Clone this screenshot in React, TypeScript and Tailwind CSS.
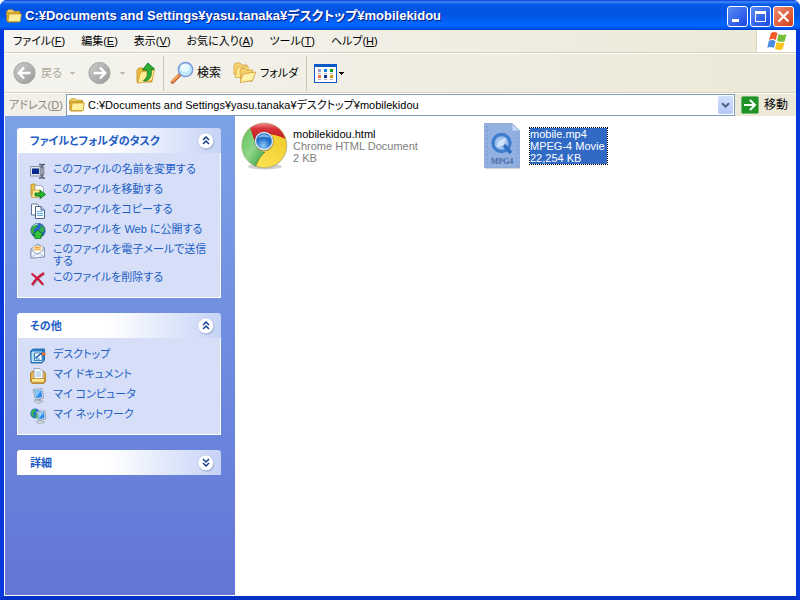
import React from 'react';

interface IconProps {
  className?: string;
}

const FolderIcon: React.FC<IconProps> = ({ className = 'size-4' }) => (
  <svg viewBox="0 0 16 16" className={className} aria-hidden="true">
    <path d="M.8 3.5 2.2 1.8H6.5L8 3.3H13.5V7H.8Z" fill="#f6d768" stroke="#c08d1c" strokeWidth=".8" />
    <path d="M.8 4.2V13L2 14H13L14 12.5V4.8H2Z" fill="#e8b83c" stroke="#b78313" strokeWidth=".8" />
    <path d="M3.2 6H15.4L14.2 13.6H2Z" fill="#fff0a0" stroke="#c8951d" strokeWidth=".8" />
  </svg>
);

const RenameIcon = () => (
  <svg viewBox="0 0 16 16" className="size-4 shrink-0" aria-hidden="true">
    <path d="M.5 3.5H11.5V13H.5Z" fill="#e4e7ee" stroke="#8a93a8" />
    <path d="M2 5.5H9V11H2Z" fill="#07288c" />
    <path d="M9 1.5H11L12 2.5 13 1.5H15M12 2.5V14M9 15H11L12 14 13 15H15" fill="none" stroke="#555e70" strokeWidth="1.6" />
    <path d="M10.2 4H13.8V12H10.2Z" fill="#d7dae0" stroke="#555e70" strokeWidth=".8" />
    <path d="M12 4V12" stroke="#555e70" />
  </svg>
);

const MoveIcon = () => (
  <svg viewBox="0 0 16 16" className="size-4 shrink-0" aria-hidden="true">
    <path d="M1 2 2 1H5L6 3H12V13H2L1 12Z" fill="#e8bd49" stroke="#b58527" strokeWidth=".8" />
    <path d="M5 2.5H11L13.5 5V12H5Z" fill="#fff" stroke="#8b98ad" strokeWidth=".7" />
    <path d="M3 7H10L8 14.5H1.5Z" fill="#ffeb98" stroke="#c19431" strokeWidth=".7" />
    <path d="M5 10H10V7L15.5 11.5 10 15.7V13H5Z" fill="#25b52c" stroke="#0a7217" strokeWidth=".8" />
  </svg>
);

const CopyIcon = () => (
  <svg viewBox="0 0 16 16" className="size-4 shrink-0" aria-hidden="true">
    <path d="M1.5 1H7L10 4V12H1.5Z" fill="#fff" stroke="#5d789b" />
    <path d="M5.5 3.5H11L14.5 7V15.5H5.5Z" fill="#f8fcff" stroke="#486586" />
    <path d="M11 3.5V7H14.5" fill="#a9cff0" stroke="#486586" />
    <path d="M7 8.5H12.5M7 10.5H13M7 12.5H13" stroke="#64aadf" />
  </svg>
);

const PublishIcon = () => (
  <svg viewBox="0 0 16 16" className="size-4 shrink-0" aria-hidden="true">
    <circle cx="8" cy="7.5" r="7.2" fill="#2868ce" stroke="#204479" strokeWidth=".6" />
    <path d="M2 4Q4 .7 8 1L7 4 4 6 4.5 9 2 11Q0 8 2 4ZM10 2Q14 3 14.7 7L12 10 9 7 11 5Z" fill="#35ad45" />
    <path d="M3 2.8Q5 1 8 1" fill="none" stroke="#b5e8fa" />
    <path d="M8 7 13.5 12H11V15.6H5V12H2.5Z" fill="#35c338" stroke="#08731a" strokeWidth=".8" />
  </svg>
);

const MailIcon = () => (
  <svg viewBox="0 0 16 16" className="size-4 shrink-0" aria-hidden="true">
    <path d="M1 6 7.5 1 14.7 5 14 14 1 15Z" fill="#cbd9ed" stroke="#7185a5" strokeWidth=".8" />
    <path d="M3 3H12.5V9L7.5 12 3 9Z" fill="#fff" stroke="#a8acaf" strokeWidth=".5" />
    <path d="M4 4.5H11M4 6.5H11" stroke="#f3aa38" strokeWidth="1.3" />
    <path d="M1 6.5 7.5 11.5 14.5 6V14L1 15Z" fill="#edf5ff" stroke="#7185a5" strokeWidth=".7" />
    <path d="M1.3 14.5 6 10.5 9 10.3 14 13.7" fill="none" stroke="#8ca3c5" strokeWidth=".7" />
  </svg>
);

const DeleteIcon = () => (
  <svg viewBox="0 0 16 16" className="size-4 shrink-0" aria-hidden="true">
    <path d="M2.5 3.5Q8 8 14 14.5M14.5 3Q7 8 3 15" fill="none" stroke="#a9abc4" strokeWidth="2" />
    <path d="M1.5 2.5Q8 7 13 13.5M14 2Q6 7 2 14" fill="none" stroke="#cf1436" strokeWidth="2.1" />
  </svg>
);

const DesktopIcon = () => (
  <svg viewBox="0 0 16 16" className="size-4 shrink-0" aria-hidden="true">
    <path d="M3 1H14.5V12L12 15H1L.5 3Z" fill="#2781d0" stroke="#195a9e" strokeWidth=".8" />
    <path d="M2 4H12V13.5H2Z" fill="#9bd4fa" stroke="#fff" strokeWidth=".7" />
    <path d="M4.5 5H10L12 7V12.5H4.5Z" fill="#fff" stroke="#2167a6" strokeWidth=".8" />
    <path d="M6 10 12 4.5" stroke="#195a9e" strokeWidth="1.6" />
    <path d="M12 4.5H15.5V7.2H12Z" fill="#e46a29" />
    <path d="M6 8V11H10" fill="none" stroke="#2781d0" />
  </svg>
);

const DocumentsIcon = () => (
  <svg viewBox="0 0 16 16" className="size-4 shrink-0" aria-hidden="true">
    <path d="M.7 5 2 3.5H14L15.3 5V14L14 15.3H2L.7 14Z" fill="#efb84c" stroke="#a76f17" strokeWidth=".9" />
    <path d="M4 .7H10L13 3.7V11H4Z" fill="#fff" stroke="#7c91ad" strokeWidth=".8" />
    <path d="M5.5 4H11M5.5 6H11M5.5 8H11" stroke="#8bbae4" />
    <path d="M1.5 10.5H14.5V14.3H1.5Z" fill="#ffe68a" stroke="#b57d20" strokeWidth=".7" />
  </svg>
);

const ComputerIcon = () => (
  <svg viewBox="0 0 16 16" className="size-4 shrink-0" aria-hidden="true">
    <path d="M4 13 9 11.5 13.5 13.5 8 15.7Z" fill="#d5d9e1" stroke="#8a91a0" strokeWidth=".6" />
    <path d="M8 10.5H11V13.5H8Z" fill="#a7adba" />
    <path d="M3 1.3 12 .7 13.8 10 5.5 11.8Z" fill="#dce3ee" stroke="#8590a5" strokeWidth=".8" />
    <path d="M4.4 2.6 11 2 12.3 9 6.3 10.2Z" fill="#2c8cec" />
    <path d="M4.5 2.7 11 2 8 7 6 9Z" fill="#82c8fb" />
  </svg>
);

const NetworkIcon = () => (
  <svg viewBox="0 0 16 16" className="size-4 shrink-0" aria-hidden="true">
    <circle cx="5.2" cy="5.5" r="4.9" fill="#1f70cd" />
    <path d="M1 4Q3 .7 6 1L5 4 3 5 4 8 2 9ZM6 6H8V10H5Z" fill="#38ba42" />
    <path d="M6 14 10 12.5 14.5 14 10 15.8Z" fill="#e0e2e8" stroke="#8a91a0" strokeWidth=".6" />
    <path d="M6.5 3.5 15 2.8 15.5 11 8.5 12.7Z" fill="#dce3ee" stroke="#8590a5" strokeWidth=".8" />
    <path d="M7.6 4.7 14 4 14.3 10 9.2 11.2Z" fill="#2c8cec" />
    <path d="M7.8 4.8 14 4 11 8 9 10Z" fill="#94d0fa" />
  </svg>
);

const RoundArrow: React.FC<{ back?: boolean }> = ({ back = false }) => (
  <svg viewBox="0 0 24 24" className="size-6" aria-hidden="true">
    <defs>
      <linearGradient id={back ? 'round-back' : 'round-forward'} x1="0" y1="0" x2="1" y2="1">
        <stop stopColor="#ccc" />
        <stop offset="1" stopColor="#999" />
      </linearGradient>
    </defs>
    <circle cx="11.5" cy="12" r="10.6" fill={back ? 'url(#round-back)' : 'url(#round-forward)'} stroke="#a3a3a0" />
    <path
      d={back ? 'M17.5 12H7M11 6.5 5.8 12 11 17.5' : 'M5.5 12H16M12 6.5 17.2 12 12 17.5'}
      fill="none"
      stroke="#fff"
      strokeWidth="2.4"
    />
  </svg>
);

const UpFolderIcon = () => (
  <svg viewBox="0 0 20 22" className="h-[22px] w-5" aria-hidden="true">
    <path d="M1 8 3 6H7L8.5 7.5H16V20H1Z" fill="#edbd42" stroke="#c28f1e" strokeWidth=".8" />
    <path d="M4.5 10 18.5 8 16 18.5 1.5 21.2Z" fill="#ffeb91" stroke="#c99a2a" strokeWidth=".8" />
    <path d="M7.5 18.5Q12.5 16 11 8H6.5L11.8 1 18.6 7 15 7.7Q16.8 16 10 19Z" fill="#2fae36" stroke="#14771f" strokeWidth=".9" />
  </svg>
);

const SearchIcon = () => (
  <svg viewBox="0 0 24 24" className="size-6" aria-hidden="true">
    <path d="M9.5 14 2.5 21" stroke="#c0602a" strokeWidth="3.6" strokeLinecap="round" />
    <path d="M8.5 14.2 2.3 20.2" stroke="#f8a562" strokeWidth="2" strokeLinecap="round" />
    <circle cx="15.5" cy="8.5" r="7.1" fill="#bfeafc" stroke="#7f97d8" strokeWidth="1.5" />
    <ellipse cx="15" cy="7" rx="4.4" ry="3.8" fill="#e8faff" />
    <path d="M12 6Q13 4 15.5 4" fill="none" stroke="#fff" strokeWidth="1.5" />
  </svg>
);

const FoldersIcon = () => (
  <svg viewBox="0 0 24 22" className="h-[22px] w-6" aria-hidden="true">
    <path d="M1 3 2.5 1H7L9 3H14V14H3L1 12Z" fill="#f7d372" stroke="#d9a245" strokeWidth=".9" />
    <path d="M2 15.5 4.5 5H15.5L13 15.5Z" fill="#ffe993" stroke="#d8a646" strokeWidth=".8" />
    <path d="M7 9 8 6.5H12L14 8H19.5V19H8Z" fill="#f6d068" stroke="#d9a245" strokeWidth=".9" />
    <path d="M10 12 22.8 10 19.5 18.5 7 20.5Z" fill="#fff2a9" stroke="#d6a440" strokeWidth=".9" />
  </svg>
);

const ViewsIcon = () => (
  <svg viewBox="0 0 23 19" className="h-[19px] w-[23px]" shapeRendering="crispEdges" aria-hidden="true">
    <path d="M0 0H23V19H0Z" fill="#0b5bc6" />
    <path d="M1 3H22V18H1Z" fill="#fff" />
    <path d="M4 5H7V8H4Z" fill="#9999cc" />
    <path d="M10 5H13V8H10Z" fill="#0a84e8" />
    <path d="M16 5H19V8H16Z" fill="#109a10" />
    <path d="M4 11H7V14H4Z" fill="#ff7448" />
    <path d="M10 11H13V14H10Z" fill="#09319b" />
    <path d="M16 11H19V14H16Z" fill="#d39c0c" />
    <path d="M4 9.5H7M10 9.5H13M16 9.5H19M4 15.5H7M10 15.5H13M16 15.5H19" stroke="#b5b5b5" />
  </svg>
);

const WindowsFlag = () => (
  <svg viewBox="0 0 20 20" className="size-5" aria-hidden="true">
    <path d="M4 2Q7.5 0 10.5 2.3L8.8 9Q5.5 7 2 9Z" fill="#f0592b" />
    <path d="M11.7 3Q15.5 5 19.5 3L17.8 10Q14 12 10 9.8Z" fill="#77bd35" />
    <path d="M1.8 10Q5.3 8 8.5 10.2L6.9 17Q4 15 .3 16.7Z" fill="#4a8dde" />
    <path d="M9.7 11Q13.5 13 17.5 11.2L15.8 18Q12 20 8 17.7Z" fill="#f8c51c" />
  </svg>
);

const ChromeIcon = () => (
  <svg viewBox="0 0 48 48" className="size-12 shrink-0" aria-hidden="true">
    <defs>
      <linearGradient id="chrome-red" x1="0" y1="0" x2="0" y2="1">
        <stop stopColor="#f0908a" />
        <stop offset=".3" stopColor="#d8333a" />
        <stop offset="1" stopColor="#b60f18" />
      </linearGradient>
      <linearGradient id="chrome-green" x1="0" y1="0" x2="1" y2="1">
        <stop stopColor="#5fbf5a" />
        <stop offset=".5" stopColor="#8fd78a" />
        <stop offset="1" stopColor="#2c9938" />
      </linearGradient>
      <linearGradient id="chrome-yellow" x1="1" y1="0" x2="0" y2="1">
        <stop stopColor="#eec720" />
        <stop offset="1" stopColor="#ffe85f" />
      </linearGradient>
      <radialGradient id="chrome-blue" cx=".45" cy=".8">
        <stop stopColor="#8cc8fa" />
        <stop offset="1" stopColor="#1d6cc8" />
      </radialGradient>
    </defs>
    <ellipse cx="24" cy="44.5" rx="17" ry="3" fill="#999" opacity=".45" />
    <circle cx="23.3" cy="23.5" r="22.5" fill="url(#chrome-yellow)" stroke="#8b8d72" strokeWidth=".6" />
    <path d="M9 6Q16 .8 24 1 39 2 44.5 17 35 12 24 12 15 12 13.5 20Z" fill="url(#chrome-red)" />
    <path d="M9 6 14 20Q15 29 24 30 18 35 14.5 44.3 3 39 1 27 0 14 9 6Z" fill="url(#chrome-green)" />
    <path d="M24 30Q18 35 14.5 44.3" fill="none" stroke="#5d7c2d" strokeWidth=".8" />
    <circle cx="23" cy="19.5" r="9.8" fill="#52525c" opacity=".55" />
    <circle cx="23" cy="19" r="9.2" fill="#dce6f0" />
    <circle cx="23" cy="19" r="7.8" fill="url(#chrome-blue)" />
    <path d="M17 16Q18.5 12.5 23 12.2 27.5 12.5 29 16 23 14 17 16Z" fill="#a9cdf4" opacity=".7" />
  </svg>
);

const Mpeg4Icon = () => (
  <svg viewBox="0 0 48 48" className="size-12 shrink-0" aria-hidden="true">
    <path d="M7 2H35L42 9V47H7Z" fill="#b5bdce" opacity=".6" />
    <path d="M6.5 1.5H34L41.5 9V45.5H6.5Z" fill="#92b0e0" stroke="#86a3d4" strokeWidth=".8" />
    <path d="M34 1.5V9H41.5Z" fill="#c3d8f7" stroke="#86a3d4" strokeWidth=".6" />
    <path d="M9 4V45M39 11V45" stroke="#7295d0" strokeWidth="1.2" strokeDasharray="1.5 2.5" />
    <circle cx="23.5" cy="21" r="8.5" fill="#a3c2ee" stroke="#3f7fd0" strokeWidth="3.4" />
    <path d="M26 23 33 31" stroke="#2f6fc2" strokeWidth="3.6" />
    <path d="M18.5 25.5 20.5 19 28 15.5 26 23Z" fill="#cfe2fb" />
    <text x="24" y="42" textAnchor="middle" fontFamily="Liberation Serif, serif" fontSize="8" fontWeight="700" fill="#4a6ca6">
      MPG4
    </text>
  </svg>
);

const Caret: React.FC<IconProps> = ({ className }) => (
  <svg viewBox="0 0 5 3" className={`h-[3px] w-[5px] ${className ?? ''}`} shapeRendering="crispEdges" aria-hidden="true">
    <path d="M0 0H5L2.5 3Z" fill="currentColor" />
  </svg>
);

const menus = [
  { label: 'ファイル', accessKey: 'F' },
  { label: '編集', accessKey: 'E' },
  { label: '表示', accessKey: 'V' },
  { label: 'お気に入り', accessKey: 'A' },
  { label: 'ツール', accessKey: 'T' },
  { label: 'ヘルプ', accessKey: 'H' },
];

const fileTasks = [
  { label: 'このファイルの名前を変更する', icon: <RenameIcon /> },
  { label: 'このファイルを移動する', icon: <MoveIcon /> },
  { label: 'このファイルをコピーする', icon: <CopyIcon /> },
  { label: 'このファイルを Web に公開する', icon: <PublishIcon /> },
  { label: 'このファイルを電子メールで送信する', icon: <MailIcon /> },
  { label: 'このファイルを削除する', icon: <DeleteIcon /> },
];

const places = [
  { label: 'デスクトップ', icon: <DesktopIcon /> },
  { label: 'マイ ドキュメント', icon: <DocumentsIcon /> },
  { label: 'マイ コンピュータ', icon: <ComputerIcon /> },
  { label: 'マイ ネットワーク', icon: <NetworkIcon /> },
];

interface TaskPanelProps {
  title: string;
  items?: { label: string; icon: React.ReactNode }[];
}

const TaskPanel: React.FC<TaskPanelProps> = ({ title, items }) => (
  <section>
    <h2>
      <button
        aria-expanded={!!items}
        className="flex h-[25px] w-full items-center justify-between rounded-t-[3px] bg-linear-to-r from-white from-45% to-[#c6d3f7] pr-1.5 pl-[13px] font-bold text-[#215dc6]"
      >
        {title}
        <svg viewBox="0 0 18 18" className="size-[18px]" aria-hidden="true">
          <circle cx="9.5" cy="9.8" r="8" fill="#a5b1d2" />
          <circle cx="8.7" cy="8.7" r="7.8" fill="#fff" stroke="#b8c4e3" strokeWidth=".7" />
          <path
            d={items ? 'M6 8 9 5 12 8M6 12 9 9 12 12' : 'M6 5 9 8 12 5M6 9 9 12 12 9'}
            fill="none"
            stroke="#123d91"
            strokeWidth="1.5"
          />
        </svg>
      </button>
    </h2>
    {items && (
      <ul className="flex flex-col gap-1 border border-t-0 border-white bg-[#d6dff7] px-3 py-2.5">
        {items.map((item) => (
          <li key={item.label}>
            <a href="#" className="flex min-h-4 items-start gap-[7px] text-[#215dc6]">
              {item.icon}
              <span className="leading-3">{item.label}</span>
            </a>
          </li>
        ))}
      </ul>
    )}
  </section>
);

const captionButton =
  'flex size-[21px] items-center justify-center rounded-[3px] border border-white bg-linear-to-br';

export default function App() {
  return (
    <div className="bg-white">
      <div className="flex h-screen flex-col overflow-hidden rounded-t-[7px] bg-[#0831d9] font-['Liberation_Sans','Noto_Sans_CJK_JP',sans-serif] text-[11px] leading-3 text-black [font-feature-settings:'palt']">
        {/* Title bar */}
        <header className="flex h-[30px] shrink-0 items-center bg-[linear-gradient(to_bottom,#0831d9_0%,#3b8cf7_6%,#0a5ce8_14%,#0054e3_30%,#0054e3_50%,#0066ff_80%,#0060f8_90%,#003dcc_100%)] pt-0.5 pr-1.5 pl-1.5">
          <FolderIcon />
          <h1 className="ml-[3px] grow truncate text-[13px] leading-4 font-bold text-white [text-shadow:1px_1px_#0a1e8c]">
            C:¥Documents and Settings¥yasu.tanaka¥デスクトップ¥mobilekidou
          </h1>
          <div className="flex gap-0.5">
            <button aria-label="最小化" className={`${captionButton} from-[#5c8af5] to-[#1c46e0]`}>
              <svg viewBox="0 0 19 19" className="size-[19px]" aria-hidden="true">
                <path d="M4 12H11V15H4Z" fill="#fff" />
              </svg>
            </button>
            <button aria-label="最大化" className={`${captionButton} from-[#5c8af5] to-[#1c46e0]`}>
              <svg viewBox="0 0 19 19" className="size-[19px]" aria-hidden="true">
                <path d="M4.5 5V14.5H14.5V5" fill="none" stroke="#fff" />
                <path d="M4 4H15V7H4Z" fill="#fff" />
              </svg>
            </button>
            <button aria-label="閉じる" className={`${captionButton} from-[#ee8a6c] to-[#d03a12]`}>
              <svg viewBox="0 0 19 19" className="size-[19px]" aria-hidden="true">
                <path d="M4.5 4.5 14.5 14.5M14.5 4.5 4.5 14.5" stroke="#fff" strokeWidth="2.2" />
              </svg>
            </button>
          </div>
        </header>

        <div className="flex min-h-0 grow flex-col border-x-4 border-b-4 border-[#0639dd] border-b-[#0430c4] bg-white">
          {/* Menu bar */}
          <nav className="flex h-[23px] shrink-0 border-b border-[#d8d2bd] bg-linear-to-r from-[#f5f4f0] to-[#ece9d8]">
            <div className="flex grow items-center gap-4 pl-[9px]">
              {menus.map((menu) => (
                <button key={menu.accessKey} className="whitespace-nowrap">
                  {menu.label}(<u>{menu.accessKey}</u>)
                </button>
              ))}
            </div>
            <div className="flex w-10 items-center justify-center border-l border-[#d8d2bd] bg-white">
              <WindowsFlag />
            </div>
          </nav>

          {/* Toolbar */}
          <div className="flex h-10 shrink-0 items-center border-y border-t-white border-b-[#d8d2bd] bg-linear-to-r from-[#f4f3ee] to-[#ece9d8] pl-[9px] whitespace-nowrap">
            <button disabled className="flex w-[54px] items-center gap-1 text-[#aca899]">
              <RoundArrow back />
              戻る
            </button>
            <button disabled aria-label="戻る履歴" className="flex w-[21px] text-[#c0bcb0]">
              <Caret className="ml-[3px]" />
            </button>
            <button disabled aria-label="進む" className="w-8">
              <RoundArrow />
            </button>
            <button disabled aria-label="進む履歴" className="w-4 text-[#c0bcb0]">
              <Caret />
            </button>
            <button aria-label="上へ">
              <UpFolderIcon />
            </button>
            <div className="mr-1.5 ml-[7px] h-[35px] w-px bg-[#cbc7b0]" />
            <button className="flex w-[63px] items-center gap-[3px] text-xs">
              <SearchIcon />
              検索
            </button>
            <button className="flex w-[66px] items-center gap-[3px]">
              <FoldersIcon />
              フォルダ
            </button>
            <div className="mx-[7px] h-[35px] w-px bg-[#cbc7b0]" />
            <button aria-label="表示" className="flex items-center gap-0.5">
              <ViewsIcon />
              <Caret />
            </button>
          </div>

          {/* Address bar */}
          <form className="flex h-[23px] shrink-0 items-center border-t border-white bg-linear-to-r from-[#f2f0e8] to-[#ece9d8] pr-2 pl-[5px]">
            <label htmlFor="address" className="w-[57px] shrink-0 whitespace-nowrap text-[#8a887c]">
              アドレス(<u>D</u>)
            </label>
            <div className="flex h-[22px] grow items-center border border-[#7f9db9] bg-white pr-px pl-0.5">
              <FolderIcon />
              <input
                id="address"
                type="text"
                defaultValue="C:¥Documents and Settings¥yasu.tanaka¥デスクトップ¥mobilekidou"
                className="ml-[3px] min-w-0 grow leading-4 outline-none"
              />
              <button
                type="button"
                aria-label="アドレス一覧"
                className="flex h-[18px] w-[15px] items-center justify-center rounded-xs bg-linear-to-b from-[#d3e0fd] to-[#b5c9f8]"
              >
                <svg viewBox="0 0 9 7" className="h-[7px] w-[9px]" aria-hidden="true">
                  <path d="M1 1.2 4.5 4.7 8 1.2" fill="none" stroke="#4d6185" strokeWidth="2" />
                </svg>
              </button>
            </div>
            <button type="button" className="ml-1.5 flex items-center gap-[5px] text-xs leading-4 whitespace-nowrap">
              <svg viewBox="0 0 18 18" className="size-[18px]" aria-hidden="true">
                <rect x=".5" y=".5" width="17" height="17" rx="1.5" fill="#1f9426" stroke="#71b573" />
                <path d="M3 9H13.5M9 4 14 9 9 14" fill="none" stroke="#fff" strokeWidth="2" />
              </svg>
              移動
            </button>
          </form>

          {/* Explorer body */}
          <div className="flex min-h-0 grow border-b border-l border-white">
            <aside className="flex w-[230px] shrink-0 flex-col gap-[15px] bg-linear-to-b from-[#7ba2e7] to-[#6375d6] pt-3 pr-3.5 pl-3">
              <TaskPanel title="ファイルとフォルダのタスク" items={fileTasks} />
              <TaskPanel title="その他" items={places} />
              <TaskPanel title="詳細" />
            </aside>

            <main className="min-w-0 grow bg-white pt-1.5 pl-1.5">
              <ul className="flex flex-wrap items-start">
                <li className="flex w-[237px] items-center gap-1">
                  <ChromeIcon />
                  <div className="text-[#808080]">
                    <p className="text-black">mobilekidou.html</p>
                    <p>Chrome HTML Document</p>
                    <p>2 KB</p>
                  </div>
                </li>
                <li className="flex w-[237px] items-center gap-1">
                  <Mpeg4Icon />
                  <div className="bg-[#316ac5] pr-0.5 text-white outline outline-dotted outline-black">
                    <p>mobile.mp4</p>
                    <p>MPEG-4 Movie</p>
                    <p>22,254 KB</p>
                  </div>
                </li>
              </ul>
            </main>
          </div>
        </div>
      </div>
    </div>
  );
}
